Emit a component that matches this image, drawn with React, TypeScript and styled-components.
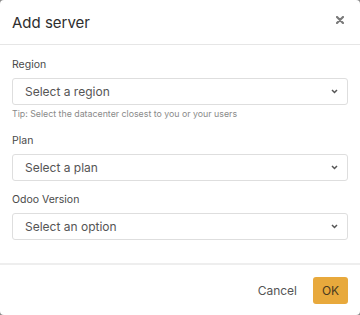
import React from "react";
import styled, { createGlobalStyle } from "styled-components";

const Global = createGlobalStyle`
  html, body { margin: 0; padding: 0; background: #8a8a8a; }
  body { font-family: Inter, "Noto Sans", sans-serif; }
  * { box-sizing: border-box; }
`;

const Modal = styled.div`
  width: 360px;
  height: 315px;
  background: #fff;
  border-radius: 4px;
  display: flex;
  flex-direction: column;
  overflow: hidden;
`;

const Header = styled.div`
  height: 45px;
  display: flex;
  align-items: center;
  justify-content: space-between;
  padding: 0 12px;
  border-bottom: 1px solid #e6e6e6;
`;

const Title = styled.h2`
  margin: 0;
  font-size: 15px;
  font-weight: 400;
  color: #2e2e2e;
`;

const Close = styled.button`
  border: 0;
  background: none;
  padding: 0;
  width: 14px;
  height: 14px;
  display: flex;
  align-items: center;
  justify-content: center;
  cursor: pointer;
  margin-top: -4px;
  margin-right: 1px;
`;

const Body = styled.div`
  flex: 1;
  padding: 13px 12px 0;
  display: flex;
  flex-direction: column;
`;

const Field = styled.div<{ $gap: number }>`
  display: flex;
  flex-direction: column;
  margin-bottom: ${(p) => p.$gap}px;
`;

const Label = styled.label`
  font-size: 10.5px;
  color: #4a4a4a;
  line-height: 14px;
  margin-bottom: 6px;
`;

const SelectBox = styled.div`
  height: 27px;
  border: 1px solid #dedede;
  border-radius: 3px;
  display: flex;
  align-items: center;
  justify-content: space-between;
  padding: 0 9px 0 12px;
  font-size: 12px;
  color: #555;
`;

const Tip = styled.div`
  font-size: 8.8px;
  color: #8a8a8a;
  margin-top: 3px;
  line-height: 11px;
`;

const Footer = styled.div`
  height: 52px;
  border-top: 2px solid #eeeeee;
  display: flex;
  align-items: center;
  justify-content: flex-end;
  gap: 16px;
  padding: 0 12px;
`;

const CancelButton = styled.button`
  border: 0;
  background: none;
  font-family: inherit;
  font-size: 12px;
  color: #555;
  padding: 0;
`;

const OkButton = styled.button`
  border: 0;
  background: #e8a93c;
  border-radius: 3px;
  width: 35px;
  height: 27px;
  font-family: inherit;
  font-size: 12px;
  color: #4a3a20;
`;

const Chevron = () => (
  <svg width="7" height="5" viewBox="0 0 7 5">
    <path d="M1 1 L3.5 3.5 L6 1" fill="none" stroke="#555" strokeWidth="1.5" />
  </svg>
);

const Select = ({ text }: { text: string }) => (
  <SelectBox>
    <span>{text}</span>
    <Chevron />
  </SelectBox>
);

export default function App() {
  return (
    <>
      <Global />
      <Modal>
        <Header>
          <Title>Add server</Title>
          <Close aria-label="Close">
            <svg width="8" height="8" viewBox="0 0 8 8">
              <path d="M1 1 L7 7 M7 1 L1 7" stroke="#7a7a7a" strokeWidth="2.2" strokeLinecap="round" />
            </svg>
          </Close>
        </Header>
        <Body>
          <Field $gap={15}>
            <Label>Region</Label>
            <Select text="Select a region" />
            <Tip>Tip: Select the datacenter closest to you or your users</Tip>
          </Field>
          <Field $gap={12}>
            <Label>Plan</Label>
            <Select text="Select a plan" />
          </Field>
          <Field $gap={0}>
            <Label>Odoo Version</Label>
            <Select text="Select an option" />
          </Field>
        </Body>
        <Footer>
          <CancelButton>Cancel</CancelButton>
          <OkButton>OK</OkButton>
        </Footer>
      </Modal>
    </>
  );
}
